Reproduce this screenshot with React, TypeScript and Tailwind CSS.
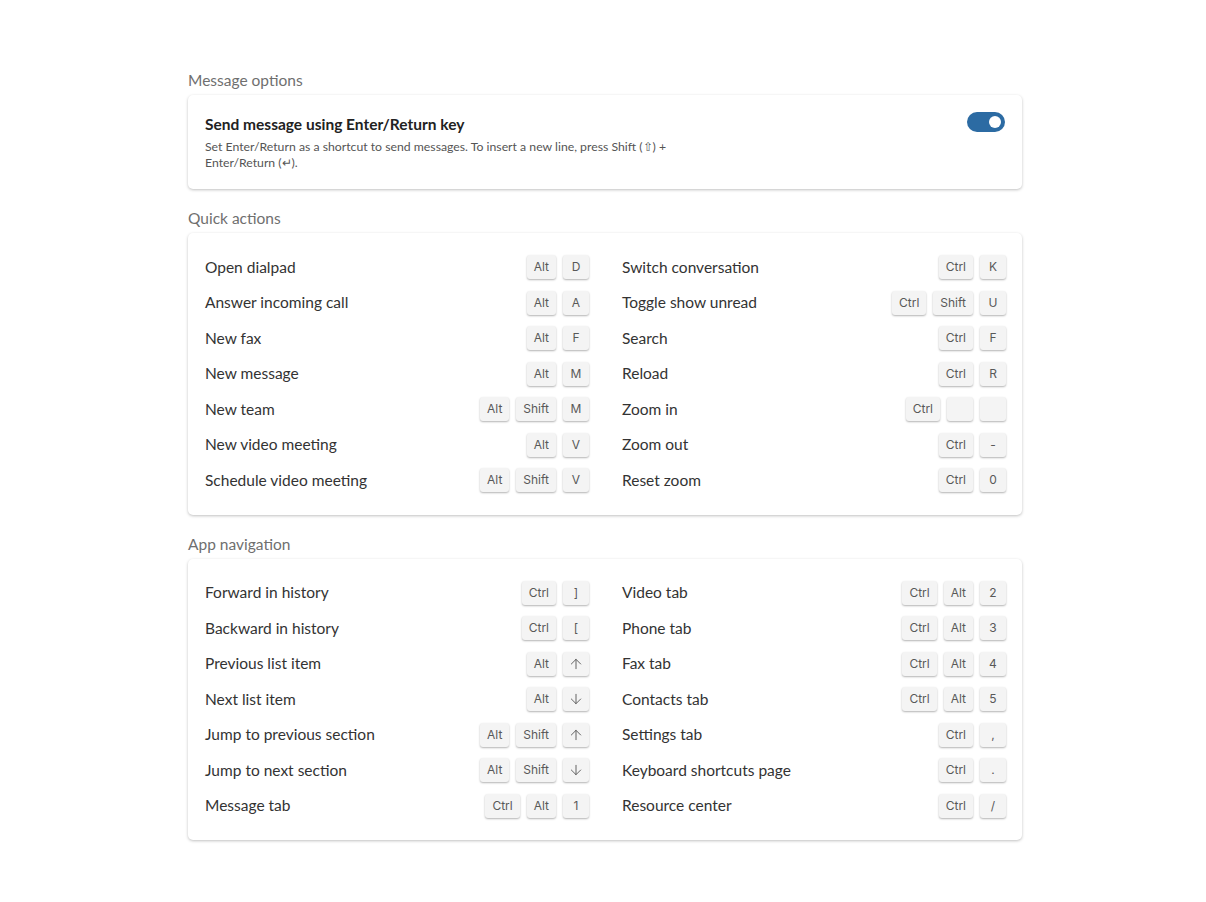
import { ArrowUp, ArrowDown } from "lucide-react";

type Shortcut = { label: string; keys: string[] };

const quickLeft: Shortcut[] = [
  { label: "Open dialpad", keys: ["Alt", "D"] },
  { label: "Answer incoming call", keys: ["Alt", "A"] },
  { label: "New fax", keys: ["Alt", "F"] },
  { label: "New message", keys: ["Alt", "M"] },
  { label: "New team", keys: ["Alt", "Shift", "M"] },
  { label: "New video meeting", keys: ["Alt", "V"] },
  { label: "Schedule video meeting", keys: ["Alt", "Shift", "V"] },
];

const quickRight: Shortcut[] = [
  { label: "Switch conversation", keys: ["Ctrl", "K"] },
  { label: "Toggle show unread", keys: ["Ctrl", "Shift", "U"] },
  { label: "Search", keys: ["Ctrl", "F"] },
  { label: "Reload", keys: ["Ctrl", "R"] },
  { label: "Zoom in", keys: ["Ctrl", "", ""] },
  { label: "Zoom out", keys: ["Ctrl", "-"] },
  { label: "Reset zoom", keys: ["Ctrl", "0"] },
];

const navLeft: Shortcut[] = [
  { label: "Forward in history", keys: ["Ctrl", "]"] },
  { label: "Backward in history", keys: ["Ctrl", "["] },
  { label: "Previous list item", keys: ["Alt", "up"] },
  { label: "Next list item", keys: ["Alt", "down"] },
  { label: "Jump to previous section", keys: ["Alt", "Shift", "up"] },
  { label: "Jump to next section", keys: ["Alt", "Shift", "down"] },
  { label: "Message tab", keys: ["Ctrl", "Alt", "1"] },
];

const navRight: Shortcut[] = [
  { label: "Video tab", keys: ["Ctrl", "Alt", "2"] },
  { label: "Phone tab", keys: ["Ctrl", "Alt", "3"] },
  { label: "Fax tab", keys: ["Ctrl", "Alt", "4"] },
  { label: "Contacts tab", keys: ["Ctrl", "Alt", "5"] },
  { label: "Settings tab", keys: ["Ctrl", ","] },
  { label: "Keyboard shortcuts page", keys: ["Ctrl", "."] },
  { label: "Resource center", keys: ["Ctrl", "/"] },
];

const Key = ({ k }: { k: string }) => {
  const arrow = k === "up" || k === "down";
  return (
    <span
      className={`flex h-6 min-w-[26px] items-center justify-center rounded-[3px] bg-[#f4f4f4] text-[12px] text-[#595959] shadow-[0_1px_2px_rgba(0,0,0,0.3)] [font-family:Inter,'Open_Sans',sans-serif] ${
        arrow ? "px-[5px]" : "px-[7px]"
      }`}
    >
      {k === "up" ? (
        <ArrowUp size={16} strokeWidth={1.4} />
      ) : k === "down" ? (
        <ArrowDown size={16} strokeWidth={1.4} />
      ) : (
        k
      )}
    </span>
  );
};

const Column = ({ items }: { items: Shortcut[] }) => (
  <div className="flex flex-col">
    {items.map((s) => (
      <div key={s.label} className="flex h-[35.5px] items-center justify-between">
        <span className="text-[15.5px] text-[#333]">{s.label}</span>
        <div className="flex gap-[7px]">
          {s.keys.map((k, i) => (
            <Key key={i} k={k} />
          ))}
        </div>
      </div>
    ))}
  </div>
);

const SectionTitle = ({ children }: { children: React.ReactNode }) => (
  <h2 className="mb-[5px] h-5 text-[15.5px] leading-5 text-[#6f6f6f]">{children}</h2>
);

const Card = ({ children, className = "" }: { children: React.ReactNode; className?: string }) => (
  <div className={`rounded-[5px] bg-white shadow-[0_1px_3px_rgba(0,0,0,0.25)] ${className}`}>
    {children}
  </div>
);

export default function App() {
  return (
    <div className="min-h-[902px] bg-white [font-family:Lato,'Open_Sans',sans-serif]">
      <div className="ml-[188px] w-[834px] pt-[70px]">
        <SectionTitle>Message options</SectionTitle>
        <Card className="flex items-start justify-between px-[17px] pb-[18px] pt-[19px]">
          <div>
            <h3 className="text-[15.5px] font-bold leading-5 text-[#222]">
              Send message using Enter/Return key
            </h3>
            <p className="mt-[5px] w-[475px] text-[12.25px] leading-4 text-[#555]">
              Set Enter/Return as a shortcut to send messages. To insert a new line, press Shift (⇧) +
              Enter/Return (↵).
            </p>
          </div>
          <button className="mt-[-2px] flex h-5 w-[38px] items-center justify-end rounded-full bg-[#2c6ba3] pr-[4px]">
            <span className="h-3 w-3 rounded-full bg-white" />
          </button>
        </Card>

        <div className="mt-[19px]">
          <SectionTitle>Quick actions</SectionTitle>
          <Card className="grid grid-cols-2 gap-x-[33px] py-[16.5px] pl-[17px] pr-[16px]">
            <Column items={quickLeft} />
            <Column items={quickRight} />
          </Card>
        </div>

        <div className="mt-[19px]">
          <SectionTitle>App navigation</SectionTitle>
          <Card className="grid grid-cols-2 gap-x-[33px] py-[16.5px] pl-[17px] pr-[16px]">
            <Column items={navLeft} />
            <Column items={navRight} />
          </Card>
        </div>
      </div>
    </div>
  );
}
